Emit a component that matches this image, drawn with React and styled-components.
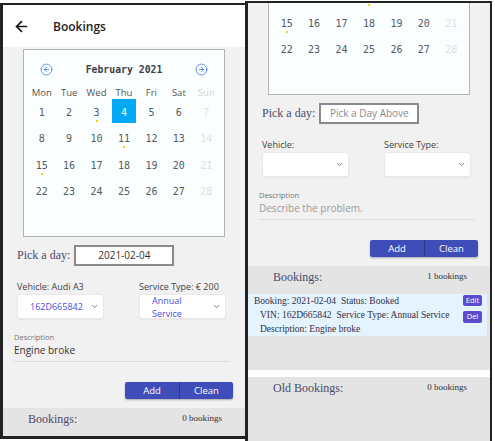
import React from 'react';
import styled, { createGlobalStyle } from 'styled-components';
import { ArrowLeft, CircleArrowLeft, CircleArrowRight, ChevronDown } from 'lucide-react';

const GlobalStyle = createGlobalStyle`
  html, body {
    margin: 0;
    padding: 0;
    background: #fff;
  }
  body {
    font-family: "Open Sans", "Liberation Sans", sans-serif;
  }
`;

const Stage = styled.div`
  display: flex;
  align-items: flex-start;
  width: 495px;
  height: 441px;
  overflow: hidden;
  background: #fff;
`;

const Phone = styled.div`
  box-sizing: border-box;
  flex: none;
  width: ${props => props.$width}px;
  height: ${props => props.$height}px;
  margin-top: ${props => props.$top}px;
  border: 0 solid #222;
  border-width: ${props => props.$borders};
  background: #f1f1f1;
  overflow: hidden;
`;

const Screen = styled.div`
  margin-top: ${props => -props.$scroll}px;
`;

const Header = styled.header`
  display: flex;
  align-items: center;
  gap: 23px;
  height: 42px;
  padding-left: 10px;
  background: #fff;
  color: #151515;
`;

const HeaderTitle = styled.h1`
  margin: 0;
  font-size: 12px;
  font-weight: 600;
  color: #222;
`;

const Calendar = styled.div`
  box-sizing: border-box;
  width: 202px;
  height: 188px;
  margin: 2px auto 0;
  padding: 7px 4px 0;
  background: #fbfefe;
  border: 1px solid #b5b5b5;
`;

const NavRow = styled.div`
  display: flex;
  align-items: center;
  justify-content: space-between;
  height: 24px;
  padding: 0 12px;
  color: #5a8df0;
`;

const Month = styled.div`
  font-family: "DejaVu Sans Mono", "Liberation Mono", monospace;
  font-weight: bold;
  font-size: 9.8px;
  color: #3b3f4a;
`;

const WeekRow = styled.div`
  display: grid;
  grid-template-columns: repeat(7, 1fr);
  margin-top: 6px;
  font-size: 9.5px;
  line-height: 12px;
  text-align: center;
`;

const WeekDay = styled.span`
  color: ${props => (props.$muted ? '#d2d2d2' : '#555')};
`;

const DayGrid = styled.div`
  display: grid;
  grid-template-columns: repeat(7, 1fr);
  grid-auto-rows: 24px;
  row-gap: 2.3px;
  justify-items: center;
`;

const DayCell = styled.div`
  box-sizing: border-box;
  display: flex;
  flex-direction: column;
  align-items: center;
  width: 24px;
  height: 24px;
  padding-top: 6px;
  font-family: "DejaVu Sans Mono", "Liberation Mono", monospace;
  font-size: 10px;
  line-height: 15px;
  background: ${props => (props.$selected ? '#03a9f4' : 'transparent')};
  color: ${props => (props.$selected ? '#fff' : props.$muted ? '#dde0e6' : '#555a63')};
`;

const Dot = styled.span`
  width: 2px;
  height: 2px;
  background: #f2d600;
`;

const PickRow = styled.div`
  display: flex;
  align-items: center;
  gap: 4px;
  margin-top: 8px;
  padding-left: 14px;
`;

const SerifLabel = styled.span`
  font-family: "Liberation Serif", "Times New Roman", serif;
  font-size: 12px;
  color: #4a4a6a;
`;

const DateBox = styled.div`
  box-sizing: border-box;
  width: 100px;
  height: 21px;
  border: 2px solid #8a8a8a;
  background: #fff;
  font-size: 10px;
  line-height: 17px;
  text-align: center;
  color: ${props => (props.$empty ? '#8a8a8a' : '#333')};
`;

const FieldGrid = styled.div`
  display: grid;
  grid-template-columns: 122px 1fr;
  margin-top: 15px;
  padding-left: 14px;
`;

const Field = styled.div`
  display: flex;
  flex-direction: column;
  gap: 1px;
`;

const FieldLabel = styled.span`
  font-size: 9px;
  line-height: 12px;
  color: #444;
`;

const Select = styled.div`
  box-sizing: border-box;
  display: flex;
  align-items: center;
  gap: 4px;
  width: 87px;
  height: 25px;
  padding: 0 4px 0 12px;
  background: #fff;
  border: 1px solid #e8e8e8;
  border-radius: 3px;
  box-shadow: 0 1px 1px rgba(0, 0, 0, 0.05);
  color: #555;
`;

const SelectValue = styled.span`
  flex: 1;
  font-size: 9px;
  line-height: 13px;
  color: #4b4be0;
`;

const DescBlock = styled.div`
  margin: 14px 15px 0 11px;
  padding-bottom: 4px;
  border-bottom: 1px solid #dcdcdc;
`;

const DescLabel = styled.div`
  font-size: 7.5px;
  line-height: 9px;
  color: #777;
`;

const DescText = styled.div`
  margin-top: 1px;
  font-size: 10px;
  line-height: 14px;
  color: ${props => (props.$placeholder ? '#9b9b9b' : '#333')};
`;

const ButtonRow = styled.div`
  display: flex;
  justify-content: flex-end;
  margin-top: 20px;
  padding-right: 12px;
`;

const ButtonGroup = styled.div`
  display: flex;
  border-radius: 2px;
  overflow: hidden;
  box-shadow: 0 1px 2px rgba(0, 0, 0, 0.3);
`;

const Button = styled.button`
  width: 54px;
  height: 17px;
  padding: 0;
  border: none;
  border-left: ${props => (props.$split ? '1px solid #2c3690' : 'none')};
  background: #3f4db8;
  color: #fff;
  font-family: "Open Sans", "Liberation Sans", sans-serif;
  font-size: 9.5px;
`;

const BookingsArea = styled.div`
  display: flex;
  flex-direction: column;
  gap: 7px;
  margin-top: 9px;
  background: #fff;
`;

const Section = styled.section`
  min-height: 104px;
  background: #e4e4e4;
`;

const SectionHead = styled.div`
  box-sizing: border-box;
  display: flex;
  align-items: flex-start;
  justify-content: space-between;
  height: 28px;
  padding: 3px 23px 0 25px;
`;

const SectionTitle = styled.span`
  font-family: "Liberation Serif", "Times New Roman", serif;
  font-size: 12px;
  line-height: 16px;
  color: #4a4a6a;
`;

const SectionCount = styled.span`
  margin-top: 1px;
  font-family: "Liberation Serif", "Times New Roman", serif;
  font-size: 9px;
  line-height: 12px;
  color: #333;
`;

const Item = styled.div`
  display: flex;
  margin-right: 3px;
  padding-left: 6px;
  background: #e4f3fd;
`;

const ItemText = styled.div`
  font-family: "Liberation Serif", "Times New Roman", serif;
  font-size: 9.5px;
  line-height: 14px;
  color: #2f2f48;
`;

const ItemLine = styled.div`
  padding-left: ${props => props.$indent}px;
  white-space: nowrap;

  span + span {
    margin-left: 5px;
  }
`;

const Actions = styled.div`
  display: flex;
  flex-direction: column;
  gap: 5px;
  margin-left: auto;
  padding: 1px 5px 0 0;
`;

const ActionButton = styled.button`
  width: 19px;
  height: ${props => props.$h}px;
  padding: 0;
  border: none;
  border-radius: 2px;
  background: #5a4bd1;
  color: #fff;
  font-family: "Open Sans", "Liberation Sans", sans-serif;
  font-size: 7.5px;
  line-height: 1;
`;

const WEEKDAYS = ['Mon', 'Tue', 'Wed', 'Thu', 'Fri', 'Sat', 'Sun'];
const BOOKED_DAYS = [3, 11, 15];
const DAYS = Array.from({ length: 28 }, (_, i) => i + 1);

const BookingScreen = ({ scroll, date, vehicle, service, description, bookings }) => (
  <Screen $scroll={scroll}>
    <Header>
      <ArrowLeft size={17} strokeWidth={2.4} />
      <HeaderTitle>Bookings</HeaderTitle>
    </Header>

    <Calendar>
      <NavRow>
        <CircleArrowLeft size={13} strokeWidth={1.8} />
        <Month>February 2021</Month>
        <CircleArrowRight size={13} strokeWidth={1.8} />
      </NavRow>
      <WeekRow>
        {WEEKDAYS.map(d => (
          <WeekDay key={d} $muted={d === 'Sun'}>{d}</WeekDay>
        ))}
      </WeekRow>
      <DayGrid>
        {DAYS.map(day => (
          <DayCell
            key={day}
            $selected={date && day === 4}
            $muted={day % 7 === 0}
          >
            {day}
            {BOOKED_DAYS.includes(day) && <Dot />}
          </DayCell>
        ))}
      </DayGrid>
    </Calendar>

    <PickRow>
      <SerifLabel>Pick a day:</SerifLabel>
      <DateBox $empty={!date}>{date || 'Pick a Day Above'}</DateBox>
    </PickRow>

    <FieldGrid>
      <Field>
        <FieldLabel>Vehicle:{vehicle ? ` ${vehicle.name}` : ''}</FieldLabel>
        <Select>
          <SelectValue>{vehicle && vehicle.vin}</SelectValue>
          <ChevronDown size={9} strokeWidth={2} />
        </Select>
      </Field>
      <Field>
        <FieldLabel>Service Type:{service ? ` € ${service.price}` : ''}</FieldLabel>
        <Select>
          <SelectValue>{service && service.name}</SelectValue>
          <ChevronDown size={9} strokeWidth={2} />
        </Select>
      </Field>
    </FieldGrid>

    <DescBlock>
      <DescLabel>Description</DescLabel>
      <DescText $placeholder={!description}>
        {description || 'Describe the problem.'}
      </DescText>
    </DescBlock>

    <ButtonRow>
      <ButtonGroup>
        <Button>Add</Button>
        <Button $split>Clean</Button>
      </ButtonGroup>
    </ButtonRow>

    <BookingsArea>
      <Section>
        <SectionHead>
          <SectionTitle>Bookings:</SectionTitle>
          <SectionCount>{bookings.length} bookings</SectionCount>
        </SectionHead>
        {bookings.map(b => (
          <Item key={b.date}>
            <ItemText>
              <ItemLine $indent={0}>
                <span>Booking: {b.date}</span>
                <span>Status: {b.status}</span>
              </ItemLine>
              <ItemLine $indent={6}>
                <span>VIN: {b.vin}</span>
                <span>Service Type: {b.service}</span>
              </ItemLine>
              <ItemLine $indent={6}>Description: {b.description}</ItemLine>
            </ItemText>
            <Actions>
              <ActionButton $h={11}>Edit</ActionButton>
              <ActionButton $h={12}>Del</ActionButton>
            </Actions>
          </Item>
        ))}
      </Section>
      <Section>
        <SectionHead>
          <SectionTitle>Old Bookings:</SectionTitle>
          <SectionCount>0 bookings</SectionCount>
        </SectionHead>
      </Section>
    </BookingsArea>
  </Screen>
);

const App = () => (
  <>
    <GlobalStyle />
    <Stage>
      <Phone $width={245} $height={436} $top={3} $borders="2px 0 3px 3px">
        <BookingScreen
          scroll={0}
          date="2021-02-04"
          vehicle={{ name: 'Audi A3', vin: '162D665842' }}
          service={{ name: 'Annual Service', price: 200 }}
          description="Engine broke"
          bookings={[]}
        />
      </Phone>
      <Phone $width={247} $height={440} $top={1} $borders="2px 2px 0 3px">
        <BookingScreen
          scroll={140}
          date=""
          bookings={[
            {
              date: '2021-02-04',
              status: 'Booked',
              vin: '162D665842',
              service: 'Annual Service',
              description: 'Engine broke',
            },
          ]}
        />
      </Phone>
    </Stage>
  </>
);

export default App;
